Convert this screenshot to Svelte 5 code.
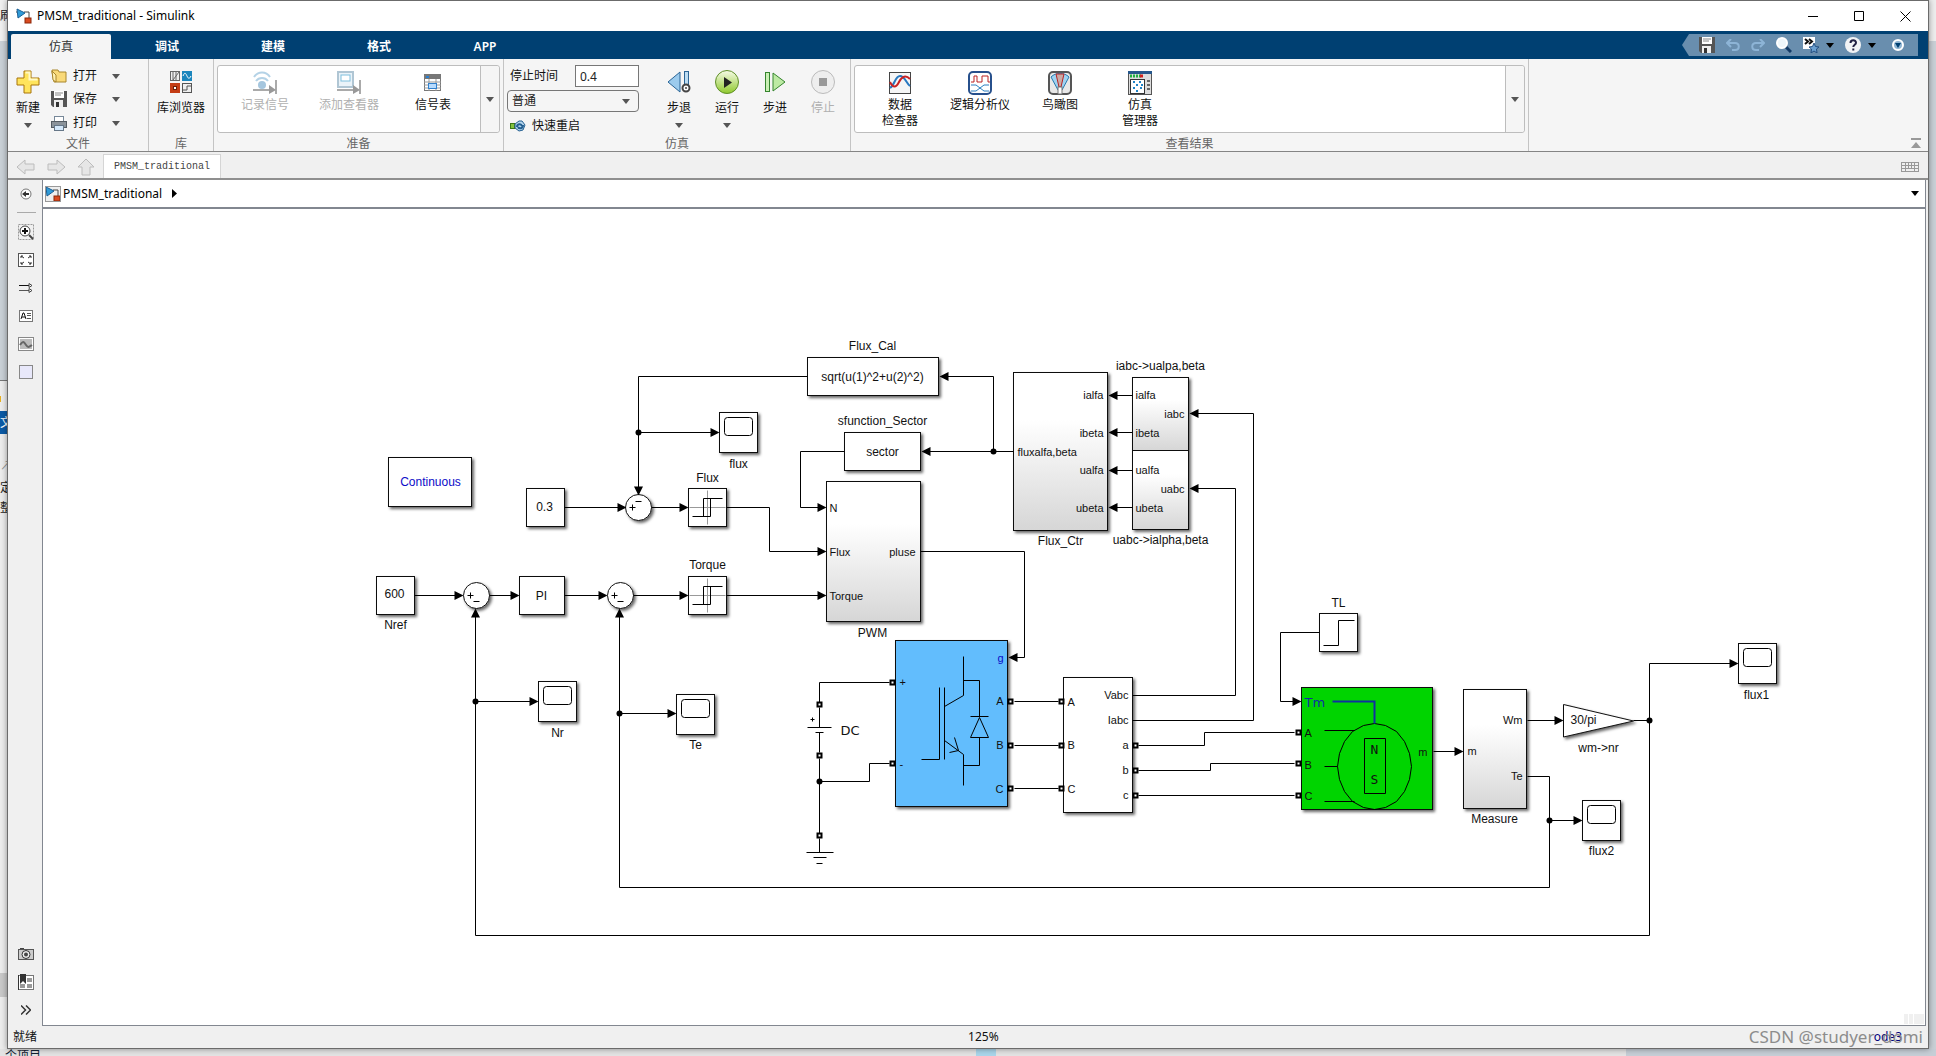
<script>
  let stopTime = $state('0.4');
  let mode = $state('普通');

  const tabs = ['仿真', '调试', '建模', '格式', 'APP'];

  // Plain rectangular blocks: x, y, width, height, fill
  const boxes = [
    [388, 457, 83, 49, 'white'],
    [526, 488, 38, 38, 'white'],
    [376, 576, 38, 38, 'white'],
    [519, 576, 45, 38, 'white'],
    [688, 488, 38, 38, 'white'],
    [688, 576, 38, 38, 'white'],
    [807, 357, 131, 38, 'white'],
    [844, 432, 76, 38, 'white'],
    [826, 481, 94, 140, 'fade'],
    [1013, 372, 94, 158, 'fade'],
    [1132, 377, 56, 73, 'fade'],
    [1132, 450, 56, 79, 'fade'],
    [895, 640, 112, 166, 'blue'],
    [1063, 677, 69, 135, 'white'],
    [1319, 613, 38, 38, 'white'],
    [1301, 687, 131, 122, 'green'],
    [1463, 689, 63, 119, 'fade']
  ];

  const scopes = [[719, 412], [538, 681], [676, 694], [1738, 643], [1582, 800]];
  const sums = [[638, 507, 0, -6], [476, 595, 0, 6], [620, 595, 0, 6]];

  // Signal lines; "dir" puts an arrow head on the last point
  const wires = [
    { p: '564,507 620,507', tip: [626, 507], dir: 0 },
    { p: '807,376 638,376 638,488', tip: [638, 495], dir: 90 },
    { p: '638,432 712,432', tip: [719, 432], dir: 0 },
    { p: '651,507 682,507', tip: [688, 507], dir: 0 },
    { p: '726,507 769,507 769,551 820,551', tip: [826, 551], dir: 0 },
    { p: '726,595 820,595', tip: [826, 595], dir: 0 },
    { p: '414,595 457,595', tip: [463, 595], dir: 0 },
    { p: '489,595 512,595', tip: [519, 595], dir: 0 },
    { p: '564,595 601,595', tip: [607, 595], dir: 0 },
    { p: '633,595 682,595', tip: [688, 595], dir: 0 },
    { p: '475,701 532,701', tip: [538, 701], dir: 0 },
    { p: '619,713 670,713', tip: [676, 713], dir: 0 },
    { p: '993,451 993,376 945,376', tip: [939, 376], dir: 180 },
    { p: '1013,451 927,451', tip: [921, 451], dir: 180 },
    { p: '844,451 800,451 800,507 820,507', tip: [826, 507], dir: 0 },
    { p: '920,551 1024,551 1024,657 1014,657', tip: [1008, 657], dir: 180 },
    { p: '1132,395 1114,395', tip: [1108, 395], dir: 180 },
    { p: '1132,432 1114,432', tip: [1108, 432], dir: 180 },
    { p: '1132,470 1114,470', tip: [1108, 470], dir: 180 },
    { p: '1132,507 1114,507', tip: [1108, 507], dir: 180 },
    { p: '1132,720 1253,720 1253,413 1195,413', tip: [1189, 413], dir: 180 },
    { p: '1132,695 1235,695 1235,488 1195,488', tip: [1189, 488], dir: 180 },
    { p: '1319,632 1280,632 1280,701 1295,701', tip: [1301, 701], dir: 0 },
    { p: '1433,751 1457,751', tip: [1463, 751], dir: 0 },
    { p: '1527,720 1557,720', tip: [1563, 720], dir: 0 },
    { p: '1649,720 1649,663 1732,663', tip: [1738, 663], dir: 0 },
    { p: '1549,820 1576,820', tip: [1582, 820], dir: 0 },
    { p: '1633,720 1649,720 1649,935 475,935 475,615', tip: [475, 608], dir: -90 },
    { p: '1527,776 1549,776 1549,887 619,887 619,615', tip: [619, 608], dir: -90 },
    { p: '1014,701 1058,701' },
    { p: '1014,745 1058,745' },
    { p: '1014,788 1058,788' },
    { p: '1138,745 1204,745 1204,732 1294,732' },
    { p: '1138,770 1210,770 1210,763 1294,763' },
    { p: '1138,795 1294,795' },
    { p: '889,682 819,682 819,702' },
    { p: '889,763 869,763 869,781 819,781' },
    { p: '819,758 819,833' }
  ];

  const dots = [[638, 432], [475, 701], [619, 713], [993, 451], [819, 781], [1649, 720], [1549, 820]];

  const ports = [
    [892, 682], [892, 763], [1010, 701], [1010, 745], [1010, 788],
    [1061, 701], [1061, 745], [1061, 788], [1135, 745], [1135, 770], [1135, 795],
    [1298, 732], [1298, 763], [1298, 795], [819, 704], [819, 755], [819, 835]
  ];

  // Block names and contents, centred on x, baseline y
  const names = [
    [430, 485, 'Continuous', 'link'], [544, 510, '0.3'], [394, 597, '600'], [395, 628, 'Nref'],
    [541, 599, 'PI'], [707, 481, 'Flux'], [707, 568, 'Torque'], [738, 467, 'flux'],
    [557, 736, 'Nr'], [695, 748, 'Te'], [872, 349, 'Flux_Cal'], [872, 380, 'sqrt(u(1)^2+u(2)^2)'],
    [882, 424, 'sfunction_Sector'], [882, 455, 'sector'], [872, 636, 'PWM'], [1060, 544, 'Flux_Ctr'],
    [1160, 369, 'iabc->ualpa,beta'], [1160, 543, 'uabc->ialpha,beta'], [1338, 606, 'TL'],
    [1494, 822, 'Measure'], [1583, 723, '30/pi'], [1598, 751, 'wm->nr'], [1756, 698, 'flux1'],
    [1601, 854, 'flux2']
  ];

  const inLabels = [
    [829, 511, 'N'], [829, 555, 'Flux'], [829, 599, 'Torque'], [1017, 455, 'fluxalfa,beta'],
    [1135, 398, 'ialfa'], [1135, 436, 'ibeta'], [1135, 473, 'ualfa'], [1135, 511, 'ubeta'],
    [899, 685, '+'], [899, 767, '-'], [1067, 705, 'A'], [1067, 748, 'B'], [1067, 792, 'C'],
    [1304, 736, 'A'], [1304, 768, 'B'], [1304, 799, 'C'], [1467, 754, 'm']
  ];

  const outLabels = [
    [915, 555, 'pluse'], [1103, 398, 'ialfa'], [1103, 436, 'ibeta'], [1103, 473, 'ualfa'],
    [1103, 511, 'ubeta'], [1184, 417, 'iabc'], [1184, 492, 'uabc'], [1003, 661, 'g', 'link'],
    [1003, 704, 'A'], [1003, 748, 'B'], [1003, 792, 'C'], [1128, 698, 'Vabc'], [1128, 723, 'Iabc'],
    [1128, 748, 'a'], [1128, 773, 'b'], [1128, 798, 'c'], [1427, 755, 'm'], [1522, 723, 'Wm'],
    [1522, 779, 'Te']
  ];

  const rotor = Array.from({ length: 20 }, (_, i) => {
    const a = (i * Math.PI) / 10;
    return `${Math.round(1374 + 37 * Math.cos(a))},${Math.round(766 + 43 * Math.sin(a))}`;
  }).join(' ');
</script>

{#snippet caret()}
  <svg class="caret" width="8" height="5" viewBox="0 0 8 5" aria-hidden="true"><path d="M0 0h8L4 5z" /></svg>
{/snippet}

{#snippet logo()}
  <svg width="16" height="16" viewBox="0 0 16 16" aria-hidden="true">
    <path d="M1 4H0M8 4h5v6" fill="none" stroke="#444" />
    <path d="M1 1l8 4-7 5z" fill="#2f9bd8" stroke="#1a5f94" />
    <rect x="9" y="10" width="6" height="5" fill="#d94a20" stroke="#8c2608" />
  </svg>
{/snippet}

{#snippet disk()}
  <svg width="16" height="16" viewBox="0 0 16 16" aria-hidden="true">
    <path d="M0 0h16v16H2l-2-2z" fill="#555" />
    <rect x="3" y="0" width="10" height="7" fill="#fff" />
    <path d="M4 2h8M4 4h6" stroke="#888" />
    <rect x="3" y="9" width="9" height="7" fill="#eee" />
    <rect x="5" y="11" width="3" height="5" fill="#333" />
  </svg>
{/snippet}

<div class="desktop">
  <div class="behind top-left"><span>刷</span></div>
  <div class="behind top-right"></div>
  <div class="behind explorer">
    <b class="mark"></b><span class="menu">文件</span><span class="pin">↗</span><span class="word">定</span><span class="word">整试</span>
  </div>
  <div class="behind foot"><span>个项目</span><i></i></div>

  <main class="window">
    <header class="title">
      {@render logo()}
      <h1>PMSM_traditional - Simulink</h1>
      <button aria-label="最小化"><svg width="11" height="11"><path d="M0 5.5h10" /></svg></button>
      <button aria-label="最大化"><svg width="11" height="11"><path d="M.5.5h9v9h-9z" /></svg></button>
      <button aria-label="关闭"><svg width="11" height="11"><path d="M.5.5l10 10m0-10l-10 10" /></svg></button>
    </header>

    <nav class="tabs">
      {#each tabs as t, i}
        <button class:active={i === 0}>{t}</button>
      {/each}
      <div class="quick">
        <button aria-label="保存">{@render disk()}</button>
        <button aria-label="撤销"><svg width="14" height="12" viewBox="0 0 14 12"><path d="M5 0L1 4l4 4M1 4h8c5 0 5 7 0 7H6" fill="none" stroke="#8db4d6" stroke-width="2" /></svg></button>
        <button aria-label="重做"><svg width="14" height="12" viewBox="0 0 14 12"><path d="M9 0l4 4-4 4M13 4H5c-5 0-5 7 0 7h3" fill="none" stroke="#8db4d6" stroke-width="2" /></svg></button>
        <button aria-label="搜索"><svg width="16" height="16" viewBox="0 0 16 16"><path d="M9 9l6 6" stroke="#123a66" stroke-width="3" /><circle cx="6" cy="6" r="5" fill="#eef6fb" stroke="#fff" stroke-width="2" /></svg></button>
        <button class="wide" aria-label="收藏">
          <svg width="16" height="16" viewBox="0 0 16 16"><rect width="12" height="12" fill="#fff" /><path d="M2 2l3 2.500-3 2.500M6 2l3 2.500-3 2.500" fill="none" stroke="#111" stroke-width="2" /><path d="M11 6l1.500 3.500 3.500.5-2.500 2 .5 4-3-2-3 2 .5-4L6 10l3.500-.5z" fill="#6a9fd0" stroke="#234f80" /></svg>
          {@render caret()}
        </button>
        <button class="wide" aria-label="帮助">
          <svg width="16" height="16" viewBox="0 0 16 16"><circle cx="8" cy="8" r="8" fill="#f1f3f5" /><path d="M5.500 6c0-3.500 5.500-3.500 5.500-.3 0 2-2.700 2-2.700 4.300M8.300 11.500v2" fill="none" stroke="#224" stroke-width="2" /></svg>
          {@render caret()}
        </button>
        <button class="last" aria-label="更多"><svg width="12" height="12" viewBox="0 0 12 12"><circle cx="6" cy="6" r="5" fill="#8fb4d2" stroke="#fff" stroke-width="2" /><path d="M3 4h6L6 9z" fill="#004072" /></svg></button>
      </div>
    </nav>

    <section class="ribbon">
      <div class="group file">
        <div class="body">
          <button class="big narrow">
            <svg width="24" height="24" viewBox="0 0 24 24"><path d="M8 1h7v7h8v7h-8v8H8v-8H1V8h7z" fill="#ffe45c" stroke="#a8750a" /><path d="M9.500 2.500h4v7h8" fill="none" stroke="#fff8c8" stroke-width="2" /></svg>
            <span>新建</span>{@render caret()}
          </button>
          <div class="rows">
            <button><svg width="16" height="14" viewBox="0 0 16 14"><path d="M1 3V1h6l1 2h7v10H3z" fill="#f9d978" stroke="#a8862c" /><path d="M1 2l4 4v7L2 11z" fill="#fff0b0" stroke="#a8862c" /></svg><span>打开</span>{@render caret()}</button>
            <button>{@render disk()}<span>保存</span>{@render caret()}</button>
            <button><svg width="16" height="15" viewBox="0 0 16 15"><rect x="3.500" y=".5" width="9" height="5" fill="#fff" stroke="#789" /><rect x=".5" y="5.500" width="15" height="6" fill="#8b939a" stroke="#555c63" /><rect x="3.500" y="9.500" width="9" height="5" fill="#d4e8fa" stroke="#678" /></svg><span>打印</span>{@render caret()}</button>
          </div>
        </div>
        <h2>文件</h2>
      </div>

      <div class="group library">
        <div class="body">
          <button class="big">
            <svg width="22" height="22" viewBox="0 0 22 22"><rect x=".5" y=".5" width="9" height="9" fill="#eee" stroke="#666" /><path d="M3 0v9L9 1M6 0v9" fill="none" stroke="#666" /><rect x="12" y="0" width="10" height="10" fill="#1b86bd" /><path d="M13 5c2-5 3-2 4 0s2 4 4 0" fill="none" stroke="#fff" /><rect y="12" width="10" height="10" fill="#c43d15" /><rect x="3.500" y="15.500" width="3" height="3" fill="#fff" stroke="#701f06" /><rect x="12.500" y="12.500" width="9" height="9" fill="#eee" stroke="#555" /><path d="M13 19h4v-4h4" fill="none" stroke="#555" /></svg>
            <span>库浏览器</span>
          </button>
        </div>
        <h2>库</h2>
      </div>

      <div class="group prepare">
        <div class="body gallery">
          <div class="items">
            <button disabled><svg width="24" height="24" viewBox="0 0 24 24"><path d="M1 6c4-6 12-6 16 0M3 10c3-4 9-4 12 0" fill="none" stroke="#b4d2e6" stroke-width="2" /><circle cx="9" cy="14" r="4" fill="#a5c6de" /><path d="M0 19h17M23 9v14" stroke="#aaa" stroke-width="2" /><path d="M16 14l7 5-7 4z" fill="#999" /></svg><span>记录信号</span></button>
            <button disabled><svg width="24" height="24" viewBox="0 0 24 24"><rect x="1" y="1" width="15" height="15" fill="#eaf3f9" stroke="#b0c6d4" stroke-width="2" /><rect x="4" y="4" width="9" height="6" fill="#fff" stroke="#7fc0de" /><path d="M0 19h17M23 9v14" stroke="#aaa" stroke-width="2" /><path d="M16 14l7 5-7 4z" fill="#999" /></svg><span>添加查看器</span></button>
            <button><svg width="18" height="18" viewBox="0 0 18 18"><rect x=".5" y=".5" width="16" height="16" fill="#fff" stroke="#777" /><rect width="17" height="5" fill="#777" /><rect x="2" y="2" width="3" height="2" fill="#2a7fd0" /><path d="M0 8h17M0 11h17M0 14h17M5 5v12M12 5v12" stroke="#999" /><rect x="4.500" y="9.500" width="8" height="5" fill="#b8dcff" stroke="#3181cd" /></svg><span>信号表</span></button>
          </div>
          <button class="more" aria-label="展开准备">{@render caret()}</button>
        </div>
        <h2>准备</h2>
      </div>

      <div class="group simulate">
        <div class="body">
          <div class="fields">
            <div class="field"><label for="stop">停止时间</label><input id="stop" bind:value={stopTime} /></div>
            <div class="field">
              <select aria-label="仿真模式" bind:value={mode}><option>普通</option><option>加速</option></select>
              <span class="over">{@render caret()}</span>
            </div>
            <button class="restart"><svg width="16" height="12" viewBox="0 0 16 12"><rect x=".5" y="3.500" width="4" height="5" fill="#84c340" stroke="#3d7a18" /><path d="M5 4l4-3h3l3 4-2 5-4 1-4-3z" fill="#b4d6ee" stroke="#235f91" /><path d="M7 7c0-3 4-4 5-1M13 5c0 4-4 4-5 2" fill="none" stroke="#235f91" stroke-width="2" /></svg>快速重启</button>
          </div>
          <button class="big narrow run"><svg width="24" height="24" viewBox="0 0 24 24"><path d="M13 2v20L1 12z" fill="#9ccbed" stroke="#2b6596" /><rect x="17.500" y="1.500" width="4" height="19" fill="#bcdcf2" stroke="#2b6596" /><circle cx="19" cy="18" r="3.500" fill="#fff" stroke="#444" stroke-width="2" /><circle cx="19" cy="18" r="1" fill="#444" /></svg><span>步退</span>{@render caret()}</button>
          <button class="big narrow run"><svg width="24" height="24" viewBox="0 0 24 24"><circle cx="12" cy="12" r="11.500" fill="url(#play)" stroke="#5f8f28" /><path d="M9 7v11l8-5.500z" fill="#222" /><defs><linearGradient id="play" x2="0" y2="1"><stop offset="0" stop-color="#f6fbe8" /><stop offset="1" stop-color="#8fc92c" /></linearGradient></defs></svg><span>运行</span>{@render caret()}</button>
          <button class="big narrow run"><svg width="24" height="24" viewBox="0 0 24 24"><rect x="2.500" y="2.500" width="4" height="19" fill="#c9efb4" stroke="#35852e" /><path d="M10 3v18l12-9z" fill="#bdeaa4" stroke="#35852e" /></svg><span>步进</span></button>
          <button class="big narrow run" disabled><svg width="24" height="24" viewBox="0 0 24 24"><circle cx="12" cy="12" r="11.500" fill="#eee" stroke="#bbb" /><rect x="8" y="8" width="8" height="8" fill="#999" /></svg><span>停止</span></button>
        </div>
        <h2>仿真</h2>
      </div>

      <div class="group results">
        <div class="body gallery">
          <div class="items">
            <button><svg width="24" height="24" viewBox="0 0 24 24"><rect x="1.500" y="1.500" width="21" height="21" fill="#f6f6f6" stroke="#444" /><path d="M2 17C7 14 7 5 12 5s6 7 10 10" fill="none" stroke="#2878c0" stroke-width="2" /><path d="M2 11c3 6 6 6 9 0s7-7 11-3" fill="none" stroke="#c82222" stroke-width="2" /></svg><span>数据<br />检查器</span></button>
            <button><svg width="24" height="24" viewBox="0 0 24 24"><rect x="1" y="1" width="22" height="22" rx="4" fill="#fff" stroke="#27508c" stroke-width="2" /><path d="M3 11h3V5h3v6h5V5h6v6h2" fill="none" stroke="#b22" /><path d="M3 14h5l8 6h5M3 20h5l8-6h5" fill="none" stroke="#2a7fc0" /></svg><span>逻辑分析仪</span></button>
            <button><svg width="24" height="24" viewBox="0 0 24 24"><rect x="1" y="1" width="22" height="22" rx="4" fill="#e8e8e8" stroke="#555" stroke-width="2" /><path d="M3 6c5-5 13-5 18 0l-7 13h-4z" fill="#9fd2f0" stroke="#2779ae" /><path d="M8 3h8l-3 13h-2z" fill="#c9aaa6" stroke="#b82222" /><rect x="10" y="16" width="4" height="7" fill="#fff" stroke="#777" /></svg><span>鸟瞰图</span></button>
            <button><svg width="24" height="24" viewBox="0 0 24 24"><rect x=".5" y=".5" width="23" height="23" fill="#ddd" stroke="#555" /><rect width="24" height="3" fill="#27588c" /><path d="M2 5h11" stroke="#20b040" stroke-width="3" stroke-dasharray="2 1" /><path d="M12 5h3" stroke="#d02020" stroke-width="3" /><rect x="2.500" y="8.500" width="14" height="14" fill="#fff" stroke="#333" /><path d="M5 11h2M11 11h2M8 14h2M5 17h2M12 17h2M8 20h2M13 14h2" stroke="#2185c8" stroke-width="2" /><path d="M19 10h3M19 14h3M19 18h3" stroke="#666" stroke-width="2" /></svg><span>仿真<br />管理器</span></button>
          </div>
          <button class="more" aria-label="展开结果">{@render caret()}</button>
        </div>
        <h2>查看结果</h2>
      </div>
      <button class="collapse" aria-label="折叠工具条"><svg width="10" height="10"><path d="M0 0h10v2H0zM5 4l5 6H0z" fill="#999" /></svg></button>
    </section>

    <div class="models">
      <button aria-label="后退"><svg width="20" height="16" viewBox="0 0 20 16"><path d="M1 8l8-7v4h9v6H9v4z" /></svg></button>
      <button aria-label="前进"><svg width="20" height="16" viewBox="0 0 20 16"><path d="M19 8l-8-7v4H2v6h9v4z" /></svg></button>
      <button aria-label="向上"><svg width="18" height="18" viewBox="0 0 18 18"><path d="M9 1l8 8h-4v8H5V9H1z" /></svg></button>
      <button class="model">PMSM_traditional</button>
      <button class="keys" aria-label="键盘快捷方式"><svg width="18" height="11" viewBox="0 0 18 11"><rect x=".5" y=".5" width="17" height="9" /><path d="M1 3.500h16M1 6.500h16M4.500 1v9M7.500 1v6M10.500 1v6M13.500 1v9" /></svg></button>
    </div>

    <div class="work">
      <aside>
        <button aria-label="隐藏浏览器"><svg width="12" height="12" viewBox="0 0 12 12"><circle cx="6" cy="6" r="5" fill="#fff" stroke="#777" /><path d="M9 5H6V3L2 6l4 3V7h3z" fill="#333" /></svg></button>
        <hr />
        <button aria-label="缩放"><svg width="16" height="16" viewBox="0 0 16 16"><rect x=".5" y=".5" width="15" height="15" fill="none" stroke="#999" stroke-dasharray="2 1" /><path d="M11 11l4 4" stroke="#444" stroke-width="2" /><circle cx="7" cy="7" r="5" fill="#fff" stroke="#444" /><path d="M4 7h6M7 4v6" stroke="#111" stroke-width="2" /></svg></button>
        <button aria-label="适应窗口"><svg width="16" height="14" viewBox="0 0 16 14"><rect x=".5" y=".5" width="15" height="13" fill="#fff" stroke="#555" /><path d="M3 5V3h2M13 5V3h-2M3 9v2h2M13 9v2h-2M3 3l3 2M13 3l-3 2M3 11l3-2M13 11l-3-2" fill="none" stroke="#333" /></svg></button>
        <button aria-label="采样时间"><svg width="14" height="10" viewBox="0 0 14 10"><path d="M0 2.500h10" stroke="#111" /><path d="M0 7.500h10" stroke="#555" /><path d="M10 .5l3 2-3 2zM10 5.500l3 2-3 2z" fill="#fff" stroke="#444" /></svg></button>
        <button aria-label="注释"><svg width="14" height="12" viewBox="0 0 14 12"><rect x=".5" y=".5" width="13" height="11" fill="#fff" stroke="#777" /><path d="M2 9l2-6h1l2 6M3 7h3" fill="none" stroke="#111" /><path d="M8 3.500h4M8 5.500h4M8 8.500h4" stroke="#555" /></svg></button>
        <button aria-label="图像"><svg width="16" height="14" viewBox="0 0 16 14"><rect x=".5" y=".5" width="15" height="13" fill="#fff" stroke="#888" /><rect x="2" y="2" width="12" height="10" fill="#bbb" /><path d="M2 8c3-5 4-3 6 0s3 2 6 0" fill="none" stroke="#666" stroke-width="2" /></svg></button>
        <button aria-label="区域"><svg width="14" height="14"><rect x=".5" y=".5" width="13" height="13" fill="#e8e8fa" stroke="#888" /></svg></button>
        <span class="fill"></span>
        <button aria-label="截图"><svg width="16" height="12" viewBox="0 0 16 12"><rect x=".5" y="1.500" width="15" height="10" fill="#ccc" stroke="#555" /><path d="M2 .5h4" stroke="#444" /><circle cx="8" cy="6.500" r="4" fill="#eee" stroke="#333" /><circle cx="8" cy="6.500" r="2" fill="#444" /></svg></button>
        <button aria-label="模型数据"><svg width="16" height="16" viewBox="0 0 16 16"><rect x=".5" y="1.500" width="15" height="14" fill="#fff" stroke="#777" /><path d="M.5 1v15" stroke="#333" /><path d="M9 4h5v4H9zM9 10h5v4H9zM2 10h5v4H2z" fill="#999" /><path d="M2 0h6v10L5 7l-3 3z" fill="#333" /></svg></button>
        <button aria-label="更多工具"><svg width="10" height="10" viewBox="0 0 10 10"><path d="M0 .5L4.500 5 0 9.500M5 .5L9.500 5 5 9.500" fill="none" stroke="#333" stroke-width="1.500" /></svg></button>
      </aside>

      <div class="editor">
        <div class="crumbs">
          <span class="chip">{@render logo()}</span>
          <a href="#model">PMSM_traditional</a>
          <svg width="5" height="9" viewBox="0 0 5 9" aria-hidden="true"><path d="M0 0l5 4.500L0 9z" /></svg>
          <button aria-label="历史记录">{@render caret()}</button>
        </div>
        <div class="canvas">
          <svg class="diagram" role="img" aria-label="PMSM_traditional">
            <defs>
              <linearGradient id="fade" x2="0" y2="1"><stop offset="0.3" stop-color="#fff" /><stop offset="1" stop-color="#d6d6d6" /></linearGradient>
              <filter id="shade" x="-20%" y="-20%" width="150%" height="150%"><feDropShadow dx="2" dy="2" stdDeviation="1.500" flood-color="#000" flood-opacity="0.6" /></filter>
            </defs>
            <g transform="translate(-42.500 -208.500)">
              <g class="shapes" filter="url(#shade)">
                {#each boxes as [x, y, w, h, fill]}<rect class={fill} {x} {y} width={w} height={h} />{/each}
                {#each scopes as [x, y]}<rect class="white" {x} {y} width="38" height="40" />{/each}
                {#each sums as [x, y]}<circle class="white" cx={x} cy={y} r="13" />{/each}
                <path class="white" d="M1563 704l70 16.500-70 16z" />
              </g>
              <g class="lines">
                {#each wires as w}<polyline points={w.p} />{/each}
                {#each scopes as [x, y]}<rect x={x + 5} y={y + 5} width="28" height="18" rx="3" />{/each}
                {#each sums as [x, y, dx, dy]}<path d="M{x - 9} {y}h6m-3 -3v6M{x + dx - 3} {y + dy}h6" />{/each}
                {#each [507, 595] as y}
                  <path class="axis" d="M689 {y}h36M707 {y - 17}v34" />
                  <path d="M692 {y + 9}h18v-18M703 {y + 9}v-18h19" />
                {/each}
                <path d="M1323 645h15v-25h16" />
                <path d="M963 656v39l-19 11M939 687v72M944 687v72M921 759h18M944 740l19 14v31M954 737l4 13-9 2M963 680h16v36M970 716h18M979 717l9 20h-18zM979 737v28h-16" />
                <path d="M819 707v20M819 732v20M819 838v14" />
                <path d="M807 727h24M815 732h8M810 719h4m-2 -2v4M806 852h27M813 857h13M816 863h6" />
                <polygon points={rotor} />
                <path d="M1324 730h30M1324 766h13M1324 801h30M1364 738h21v55h-21z" />
                <path class="torque" d="M1332 701h42v22" />
              </g>
              {#each wires.filter((w) => w.tip) as w}
                <path d="M0 0l-9 -4.500v9z" transform="translate({w.tip[0]} {w.tip[1]}) rotate({w.dir})" />
              {/each}
              {#each dots as [x, y]}<circle cx={x} cy={y} r="3" />{/each}
              {#each ports as [x, y]}<rect class="port" x={x - 2} y={y - 2} width="4" height="4" />{/each}
              <g class="names">{#each names as [x, y, s, c]}<text class={c} {x} {y}>{s}</text>{/each}</g>
              <g class="small">{#each inLabels as [x, y, s]}<text {x} {y}>{s}</text>{/each}</g>
              <g class="small out">{#each outLabels as [x, y, s, c]}<text class={c} {x} {y}>{s}</text>{/each}</g>
              <g class="mask">
                <text x="840" y="734">DC</text>
                <text class="tm" x="1304" y="706">Tm</text>
                <text class="pole" x="1374" y="753">N</text>
                <text class="pole" x="1374" y="783">S</text>
              </g>
            </g>
          </svg>
          <div class="ticks"><i></i><i></i><i></i></div>
        </div>
      </div>
    </div>

    <footer>
      <span>就绪</span><span class="zoom">125%</span><a href="#solver">ode3</a>
    </footer>
  </main>
  <p class="watermark">CSDN @studyer_domi</p>
</div>

<style>
  :global(body) { margin: 0; }
  .desktop {
    position: relative; box-sizing: border-box; min-height: 100vh; padding: 0 7px 7px;
    display: flex; overflow: hidden; background: #c9d0d6; color: #111;
    font: 12px/16px "Noto Sans", "Noto Sans CJK SC", sans-serif;
  }
  button { font: inherit; color: inherit; background: none; border: 0; padding: 0; margin: 0; }
  button, .body, .field { display: flex; align-items: center; justify-content: center; }
  svg { display: block; flex: none; }
  h1, h2 { margin: 0; font: inherit; }

  .behind { position: absolute; overflow: hidden; white-space: nowrap; color: #222; }
  .top-left { left: 0; top: 0; width: 7px; height: 41px; background: #f0f0f0; }
  .top-left span { display: block; padding-top: 8px; }
  .top-right { right: 0; top: 0; width: 7px; height: 41px; background: #ededed; }
  .explorer {
    left: 0; top: 380px; width: 7px; bottom: 7px; border-top: 1px solid #777; display: flex; flex-direction: column;
    background: linear-gradient(#ececec 592px, #c8c8c8 592px 616px, #ececec 616px);
  }
  .mark { width: 1px; height: 6px; margin: 15px 0 9px; background: #e8b020; }
  .menu { background: #0b5aa5; color: #fff; line-height: 23px; margin-bottom: 20px; }
  .pin { color: #888; line-height: 24px; }
  .word { line-height: 20px; }
  .foot { left: 0; right: 0; bottom: 0; height: 7px; background: linear-gradient(90deg, #e3e3e3 84%, #c6ced6 84%); color: #123; }
  .foot span { display: block; padding-left: 5px; line-height: 14px; }
  .foot i { position: absolute; left: 976px; top: 0; width: 20px; height: 7px; background: #a9d5ea; }

  .window {
    position: relative; flex: 1; min-width: 0; display: flex; flex-direction: column; background: #f0f0f0;
    border: 1px solid #6b6b6b; box-shadow: 0 0 6px #0006;
  }
  .title { display: flex; align-items: center; height: 30px; padding: 0 0 0 8px; background: #fff; }
  .title h1 { flex: 1; margin-left: 5px; color: #000; }
  .title button { width: 46px; height: 30px; }
  .title button path { fill: none; stroke: #000; }

  .tabs { display: flex; align-items: flex-end; gap: 6px; height: 28px; padding: 0 10px 0 3px; background: #004072; }
  .tabs > button { width: 100px; height: 25px; color: #fff; font-weight: 600; border-radius: 2px 2px 0 0; }
  .tabs > .active { background: #f5f5f5; color: #333; font-weight: 400; }
  .quick {
    margin-left: auto; align-self: center; display: flex; align-items: center; gap: 11px; height: 22px; padding: 0 14px 0 17px;
    background: #698eae; clip-path: polygon(0 50%, 7px 0, 100% 0, 100% 100%, 7px 100%);
  }
  .quick .wide { gap: 7px; }
  .quick .last { margin-left: 5px; }
  .quick .caret { fill: #000; }
  .caret { fill: #555; }

  .ribbon { display: flex; height: 92px; background: #f5f5f5; border-bottom: 1px solid #858585; }
  .group { box-sizing: border-box; display: flex; flex-direction: column; padding: 6px 3px 0; position: relative; border-right: 1px solid #c4c4c4; }
  .group h2 { text-align: center; color: #666; line-height: 22px; }
  .body { height: 68px; align-items: flex-start; justify-content: flex-start; flex: none; }
  .file { width: 141px; }
  .library { width: 65px; }
  .prepare { width: 290px; }
  .simulate { width: 347px; }
  .results { width: 678px; }
  .big { flex-direction: column; justify-content: flex-start; height: 68px; width: 100%; padding-top: 5px; }
  .big span { margin: 5px 0 6px; white-space: nowrap; line-height: 18px; }
  .big svg:first-child { height: 24px; }
  .big.narrow { width: 34px; flex: none; }
  .rows { display: flex; flex-direction: column; padding: 0 0 0 6px; }
  .rows button { height: 24px; gap: 6px; }
  .rows button:first-child { height: 22px; }
  .rows .caret { margin-left: 9px; }
  button:disabled { color: #b0b0b0; }
  .gallery { box-sizing: border-box; background: #fff; border: 1px solid #bdbdbd; border-radius: 3px; }
  .items { flex: 1; height: 100%; display: flex; padding-left: 5px; }
  .items button { width: 84px; flex-direction: column; justify-content: flex-start; padding-top: 5px; }
  .results .items button { width: 80px; }
  .items svg { height: 24px; }
  .items span { margin-top: 2px; }
  .more { width: 19px; height: 100%; background: #f5f5f5; border-left: 1px solid #bdbdbd; border-radius: 0 3px 3px 0; }
  .fields { display: flex; flex: none; flex-direction: column; width: 132px; gap: 3px; margin-right: 23px; }
  .field { justify-content: space-between; padding-left: 3px; position: relative; }
  .field:nth-child(2) { padding-left: 0; }
  .field input { box-sizing: border-box; width: 64px; height: 22px; padding: 0 4px; border: 1px solid #777; font: inherit; background: #fff; color: #222; }
  select { appearance: none; width: 100%; height: 22px; padding: 0 4px; border: 1px solid #777; border-radius: 4px; background: #f5f5f5; font: inherit; color: #222; }
  .over { position: absolute; right: 9px; top: 9px; pointer-events: none; }
  .restart { gap: 6px; justify-content: flex-start; height: 22px; padding-left: 3px; }
  .run { margin-right: 14px; }
  .collapse { margin: auto 7px 3px auto; }

  .models { display: flex; align-items: flex-end; height: 26px; padding-left: 3px; border-bottom: 2px solid #8f8f8f; }
  .models > button { height: 22px; width: 30px; }
  .models path { fill: #e6e6e6; stroke: #bcbcbc; }
  .models > .model { width: 118px; height: 24px; margin-left: 2px; background: #fff; border: 1px solid #d5d5d5; border-bottom: 0; font: 10px "Liberation Mono", monospace; color: #444; }
  .models .keys { margin-left: auto; margin-right: 3px; }
  .keys rect, .models .keys path { fill: none; stroke: #999; }

  .work { flex: 1; display: flex; min-height: 0; }
  aside { box-sizing: border-box; width: 34px; padding: 0 0 2px 2px; display: flex; flex-direction: column; align-items: center; }
  aside button { height: 28px; width: 28px; }
  aside hr { width: 19px; height: 1px; margin: 4px 0 5px; border: 0; background: #aaa; }
  .fill { flex: 1; }
  .editor { flex: 1; min-width: 0; display: flex; flex-direction: column; margin-right: 2px; border: solid #828790; border-width: 0 1px 1px; }
  .crumbs { display: flex; align-items: center; height: 27px; padding: 0 6px 0 2px; background: #fff; border-bottom: 2px solid #828790; gap: 2px; }
  .chip { background: #eee; outline: 1px solid #999; outline-offset: -1px; }
  .crumbs a { color: #000; text-decoration: none; margin-right: 8px; }
  .crumbs button { margin-left: auto; }
  .crumbs .caret { fill: #000; }
  .canvas { flex: 1; min-height: 0; background: #fff; position: relative; }
  .diagram { width: 100%; height: 100%; overflow: hidden; }
  .ticks { position: absolute; right: 1px; bottom: 1px; display: flex; gap: 1px; }
  .ticks i { width: 4px; height: 10px; background: #f0f0f0; }
  .ticks i:last-child { width: 10px; }

  .shapes > * { stroke: #111; }
  .white { fill: #fff; }
  .fade { fill: url(#fade); }
  .blue { fill: #62bdfd; }
  .green { fill: #00d400; }
  .lines { fill: none; stroke: #000; }
  .axis { stroke: #999; }
  .torque { stroke: #1030a0; stroke-width: 2; }
  .port { fill: #fff; stroke: #000; stroke-width: 2; }
  text { font-family: "Liberation Sans", sans-serif; fill: #111; }
  .names text { font-size: 12px; text-anchor: middle; }
  .small text { font-size: 11px; }
  .out text { text-anchor: end; }
  text.link { fill: #0c0cc8; }
  .mask text { font: 13px "DejaVu Sans", sans-serif; }
  .mask .tm { fill: #1030a0; }
  .mask .pole { font: 13px "DejaVu Sans Mono", monospace; text-anchor: middle; }

  footer { display: flex; align-items: center; justify-content: space-between; height: 22px; padding: 0 26px 0 5px; }
  .zoom { margin-left: 56px; }
  footer a { color: #00007c; text-decoration: none; }
  .watermark { position: absolute; right: 13px; bottom: 8px; margin: 0; font: 17px/22px "Noto Sans", sans-serif; color: #8c8c8c; }
</style>
